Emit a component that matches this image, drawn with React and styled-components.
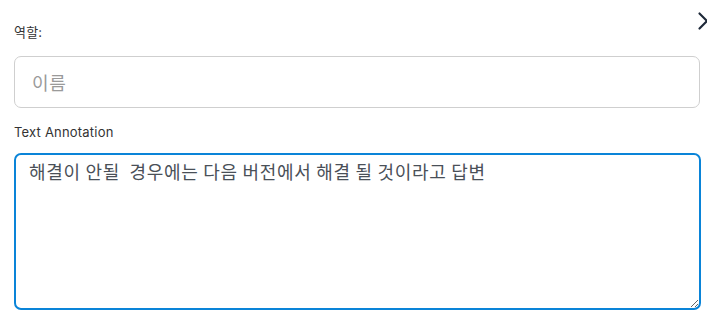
import styled, {createGlobalStyle} from "styled-components";
import {X} from "lucide-react";

const GlobalStyle = createGlobalStyle`
    html, body {
        margin: 0;
        padding: 0;
        background: #fff;
        overflow: hidden;
    }
    body {
        font-family: Inter, "Noto Sans CJK KR", sans-serif;
    }
`;

export default function App() {
    return (
        <>
            <GlobalStyle />
            <Panel>
                <CloseButton aria-label="close">
                    <X size={30} strokeWidth={1.7} />
                </CloseButton>
                <Field>
                    <Label htmlFor="role" gap={15} top={23}>역할:</Label>
                    <TextInput id="role" type="text" placeholder="이름" />
                </Field>
                <Field>
                    <Label htmlFor="note" gap={12} top={15}>Text Annotation</Label>
                    <TextArea
                        id="note"
                        autoFocus
                        defaultValue="해결이 안될  경우에는 다음 버전에서 해결 될 것이라고 답변"
                    />
                </Field>
            </Panel>
        </>
    );
}

const Panel = styled.div`
    position: relative;
    width: 707px;
    height: 321px;
    box-sizing: border-box;
    padding: 0 7px 0 14px;
    display: flex;
    flex-direction: column;
`;

const CloseButton = styled.button`
    position: absolute;
    top: 6px;
    left: 692px;
    padding: 0;
    border: none;
    background: none;
    color: #1e2939;
    display: flex;
    cursor: pointer;
`;

const Field = styled.div`
    display: flex;
    flex-direction: column;
`;

const Label = styled.label`
    display: block;
    margin-top: ${({top}) => top}px;
    margin-bottom: ${({gap}) => gap}px;
    font-family: Inter, "Noto Sans CJK KR", sans-serif;
    font-size: 13px;
    letter-spacing: 0.2px;
    line-height: 18px;
    color: #333;
`;

const TextInput = styled.input`
    box-sizing: border-box;
    width: 686px;
    height: 52px;
    padding: 0 17px;
    border: 1px solid #cfcfcf;
    border-radius: 7px;
    font-family: "Noto Sans CJK KR", sans-serif;
    font-size: 18px;
    letter-spacing: 0.7px;
    color: #333;
    outline: none;

    &::placeholder {
        color: #9a9a9a;
    }
`;

const TextArea = styled.textarea`
    box-sizing: border-box;
    width: 687px;
    height: 157px;
    padding: 3px 13px;
    border: 2px solid #0a84d8;
    border-radius: 7px;
    font-family: "Noto Sans CJK KR", sans-serif;
    font-size: 18px;
    letter-spacing: 0.7px;
    line-height: 1.5;
    color: #4a5058;
    caret-color: #222;
    outline: none;
    resize: vertical;
`;
